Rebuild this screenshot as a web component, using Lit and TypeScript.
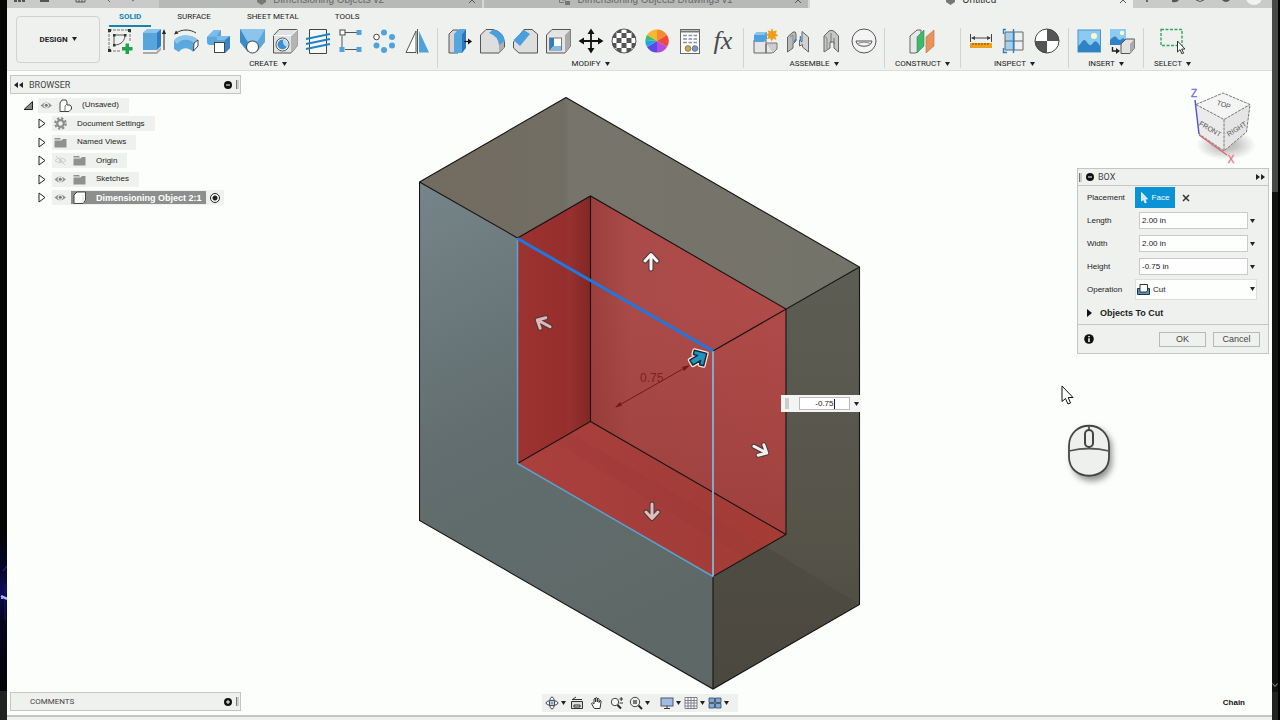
import { LitElement, html, svg, css, nothing, type SVGTemplateResult, type TemplateResult } from "lit";
import { customElement, property } from "lit/decorators.js";
import { classMap } from "lit/directives/class-map.js";

type Art = SVGTemplateResult;

const toolArt: Record<string, Art> = {
  sketch: svg`
    <path d="M2 2H23M2 2V23M23 2V14M2 23H13" fill="none" stroke="#777" stroke-dasharray="3 1"/>
    <path d="M7 7H18C18 12 15 17 7 17Z" fill="none" stroke="#555"/>
    <g fill="#333"><rect x="1" y="1" width="3" height="3"/><rect x="21" y="1" width="3" height="3"/><rect x="1" y="21" width="3" height="3"/><rect x="6" y="6" width="2.5" height="2.5"/><rect x="17" y="6" width="2.5" height="2.5"/><rect x="6" y="16" width="2.5" height="2.5"/></g>
    <path d="M18.5 15.500h3.500v3.500h3.500v3.500h-3.500v3.500h-3.500v-3.500h-3.500v-3.500h3.500z" fill="#1fa24a"/>`,
  extrude: svg`
    <path d="M3 24H16L21 19V22L17 26H3Z" fill="#aaa"/>
    <path d="M3 4.500L7 1H21L17 4.500Z" fill="#8cc4ec"/><path d="M3 4.500H17V22H3Z" fill="#57a5dc"/><path d="M17 4.500L21 1V18L17 22Z" fill="#2f7fc0"/>
    <path d="M24 22V4" stroke="#222" stroke-width="1"/><path d="M24 1L26 6H22Z" fill="#222"/>`,
  revolve: svg`
    <path d="M3 5C9 1 17 1 23 5" fill="none" stroke="#333"/><path d="M1 6.500L3 2.500L5.500 5.500Z" fill="#333"/>
    <path d="M1 13C5 6 19 6 25 12L20 24C16 19 9 19 6 24L1 21Z" fill="#5aa8de"/><path d="M1 13C5 6 19 6 25 12L21 15C16 10 8 11 4 16Z" fill="#8cc4ec"/>
    <path d="M21 15L25 12V18L20.500 23Z" fill="#fff" stroke="#444"/>`,
  sweep: svg`
    <path d="M1 9L8 2H15V8H24L24 20L19 25H10V17H4Q1 17 1 14Z" fill="#5aa8de"/><path d="M1 9L8 2H15L11 7V12H19L24 8V8H15" fill="#7dbbe8"/>
    <path d="M19 12L24 8V20L19 25Z" fill="#3785c4"/><rect x="8.500" y="14.500" width="10" height="10" fill="#fff" stroke="#444"/>`,
  loft: svg`
    <path d="M1 1H26V14L18 24H9L1 14Z" fill="#5aa8de"/><path d="M1 1H26L19 13H8Z" fill="#8cc4ec"/><path d="M1 1L8 13L9 24L1 14Z" fill="#3c8bca"/>
    <circle cx="13.500" cy="19" r="6" fill="#fff" stroke="#444"/>`,
  hole: svg`
    <path d="M1.500 7.500L7 1.500H25V18L19 25H1.500Z" fill="#e2e2e2" stroke="#555"/><path d="M19 7.500L25 1.500V18L19 25Z" fill="#b4b4b4"/><path d="M1.500 7.500H19L25 2" fill="none" stroke="#fff"/>
    <circle cx="10.500" cy="16.500" r="6.500" fill="#fff" stroke="#555"/><circle cx="10.500" cy="16.500" r="5" fill="#3f8fd0"/><path d="M11 11.500A5 5 0 0 1 15 19Q10 17 11 11.500Z" fill="#b4dcf6"/>`,
  thread: svg`
    <path d="M4.500 1.500H21.500V25.500H4.500Z" fill="#f7f7f7" stroke="#444"/>
    <path d="M1 11L25 6M1 16L25 11M1 21L25 16" stroke="#1f83c8" stroke-width="1.800"/>`,
  pattern: svg`
    <path d="M7 4.500H20M4 8V20M7 21.500H20" stroke="#555"/>
    <rect x="2" y="2" width="5" height="5" fill="#fff" stroke="#444"/><g fill="#4ea2de"><rect x="18.500" y="2" width="5" height="5"/><rect x="1.500" y="19" width="5" height="5"/><rect x="18.500" y="19" width="5" height="5"/></g>`,
  circular: svg`
    <circle cx="5.500" cy="9" r="2.800" fill="#fff" stroke="#444"/><g fill="#4ea2de"><circle cx="13" cy="4.500" r="3"/><circle cx="21" cy="9" r="3"/><circle cx="21" cy="17.500" r="3"/><circle cx="13" cy="22" r="3"/><circle cx="5.500" cy="17.500" r="3"/></g>`,
  mirror: svg`
    <path d="M12 3V24.500H2Z" fill="#fff" stroke="#555"/><path d="M15 3V24.500H25Z" fill="#4ea2de"/><path d="M13.500 1V26" stroke="#555"/>`,
  press: svg`
    <path d="M3 6L7 2H12V25H3Z" fill="#d5d5d5" stroke="#555"/><path d="M8 6L13 1H20L16 6V25H8Z" fill="#55a5de"/><path d="M16 6L20 1V20L16 25Z" fill="#2c77b5"/><path d="M18 13.500H23" stroke="#111" stroke-width="1.200"/><path d="M22 10.500L26 13.500L22 16.500Z" fill="#111"/>`,
  fillet: svg`
    <path d="M1.500 7L7 1.500H14Q25 4 25.500 15V19L20 25H1.500Z" fill="#dedede" stroke="#555"/><path d="M20 16L25 12V19L20 25Z" fill="#b0b0b0"/>
    <path d="M10 5L14 1.500Q25 4 25.500 13L20 17Q19 8 10 5Z" fill="#4a9fdc"/>`,
  chamfer: svg`
    <path d="M1.500 14L12 1.500H20L25.500 6V25H7L1.500 20Z" fill="#dedede" stroke="#555"/><path d="M1.500 12L12 2L18 6L8 18Z" fill="#4a9fdc"/>`,
  shell: svg`
    <path d="M1.500 7L7 1.500H25.500V18L20 25H1.500Z" fill="#e4e4e4" stroke="#555"/><path d="M20 7L25.500 1.500V18L20 25Z" fill="#aaa"/>
    <rect x="4.500" y="10" width="12" height="12" fill="#fff" stroke="#777"/><path d="M5 10H9V18L5 22Z" fill="#2f7fc0"/><path d="M9 18H16V22H5Z" fill="#7dbbe8"/>`,
  move: svg`
    <path d="M13 4V22M4 13H22" stroke="#111" stroke-width="1.800"/><path d="M13 .5L16.500 6H9.500ZM13 25.500L16.500 20H9.500ZM.5 13L6 9.500V16.500ZM25.500 13L20 9.500V16.500Z" fill="#111"/>`,
  appearance: svg`
    <defs><clipPath id="ball"><circle cx="13" cy="13" r="12"/></clipPath></defs><circle cx="13" cy="13" r="12" fill="#fff"/>
    <g clip-path="url(#ball)" fill="#555"><path d="M5.500 0h5v5h-5zM15.500 0h5v5h-5zM.5 5h5v5h-5zM10.500 5h5v5h-5zM20.500 5h6v5h-6zM5.500 10h5v5h-5zM15.500 10h5v5h-5zM.5 15h5v5h-5zM10.500 15h5v5h-5zM20.500 15h6v5h-6zM5.500 20h5v6h-5zM15.500 20h5v6h-5z"/></g>
    <circle cx="13" cy="13" r="12" fill="none" stroke="#555"/>`,
  wheel: svg`
    <g transform="translate(13 13)"><path d="M0 0L-10 -6A11.600 11.600 0 0 1 0 -11.600Z" fill="#f7b733"/><path d="M0 0V-11.600A11.600 11.600 0 0 1 10 -6Z" fill="#f58d2c"/><path d="M0 0L10 -6A11.600 11.600 0 0 1 10 6Z" fill="#ee4b3e"/><path d="M0 0L10 6A11.600 11.600 0 0 1 0 11.600Z" fill="#b54be0"/><path d="M0 0V11.600A11.600 11.600 0 0 1 -10 6Z" fill="#5a4be8"/><path d="M0 0L-10 6A11.600 11.600 0 0 1 -11.600 -1Z" fill="#22a4e0"/><path d="M0 0L-11.600 -1A11.600 11.600 0 0 1 -10 -6Z" fill="#3cc06a"/></g>`,
  material: svg`
    <rect x="3.500" y="1.500" width="19" height="24" fill="#fff" stroke="#666"/><path d="M3.500 3.500H22.500" stroke="#777" stroke-width="2"/>
    <path d="M6 7.500H10M11.500 7.500H15M16.500 7.500H20M6 11H10M11.500 11H15M16.500 11H20M6 14.500H10M11.500 14.500H15M16.500 14.500H20" stroke="#888fae" stroke-width="1.500"/>
    <circle cx="11" cy="20.500" r="2.800" fill="#e0a92e" stroke="#777"/><circle cx="18" cy="20.500" r="2.800" fill="#6f9cd0" stroke="#777"/>`,
  fx: svg`<text x="13" y="21" text-anchor="middle" font-family="Liberation Serif, serif" font-style="italic" font-size="26" fill="#4a4a4a">fx</text>`,
  component: svg`
    <path d="M2 12H14V25H2ZM14 16H23V22L20 25H14Z" fill="#e6e6e6" stroke="#666"/><path d="M14 15H25V21L21 25" fill="#ccc" stroke="#777"/><path d="M2 7L5 4H15V11L12 14H2Z" fill="#4ea2de"/><path d="M2 7L5 4H15L12 7Z" fill="#8cc4ec"/>
    <path d="M20 0L21.400 3.600L25 2.200L23.600 5.800L26.500 7.500L23.300 8.700L24.500 12L21.200 10.500L19.500 13.500L18.300 10.200L15 11.300L16.400 8L13.500 6.500L16.800 5.400L15.600 2.200L18.800 3.600Z" fill="#f39c12"/>`,
  joint: svg`
    <path d="M2.500 9L8 4Q11 3 11 6V13L8 16V20L2.500 24Z" fill="#b9b9b9" stroke="#666"/><path d="M5 9L8 7V16" fill="none" stroke="#888"/><path d="M14.500 12L17 14V3.500L23.500 9V24L17.500 19V16.500L14.500 18Z" fill="#d2d2d2" stroke="#666"/><path d="M9 14L11 11M15.500 8V13" stroke="#2f8bd0" stroke-width="1.500"/>`,
  asbuilt: svg`
    <path d="M6 8L11 3Q14 1 17 4L20.500 8V24L16 20V14H12V20L6 24Z" fill="#c6c6c6" stroke="#666"/><path d="M13 5V15M16 10V16" stroke="#777"/><path d="M6 8L9 10V21" fill="none" stroke="#888"/>`,
  origin: svg`
    <circle cx="13" cy="13" r="12" fill="#f4f4f4" stroke="#555"/><path d="M5 13H21C21 20 5 20 5 13Z" fill="#f4f4f4" stroke="#555"/><path d="M6 15.500Q13 12.500 20 15.500" fill="none" stroke="#888"/>`,
  plane: svg`
    <path d="M1 8L8 2H12V20L7 25H1Z" fill="#e8e8e8" stroke="#666"/><path d="M8 9L15 2V18L8 25Z" fill="#3fba6d" stroke="#2b8a50" stroke-width=".6"/><path d="M17 9L25 2V18L17 25Z" fill="#e8935c" stroke="#b8703f" stroke-width=".6"/>`,
  measure: svg`
    <path d="M2.500 6V14M23.500 6V14M4 10H22" stroke="#444"/><path d="M3 10L7 8V12ZM23 10L19 8V12Z" fill="#444"/>
    <rect x="2" y="15" width="22" height="5" fill="#f0a01c"/><path d="M5 15V17M8 15V17M11 15V17M14 15V17M17 15V17M20 15V17" stroke="#6b4a10"/>`,
  interfere: svg`
    <path d="M4 4H13V22H4Z" fill="#a5d0ef"/><path d="M4 4H22V22H4ZM4 13H22M13 4V22" fill="none" stroke="#666"/><path d="M5 1.500H2.500V6M2.500 20V24.500H6M12.500 1V25" fill="none" stroke="#2384c8" stroke-width="1.400"/>`,
  mass: svg`
    <circle cx="13" cy="13" r="12" fill="#fff"/><path d="M13 13V1A12 12 0 0 1 25 13ZM13 13V25A12 12 0 0 1 1 13Z" fill="#555"/><circle cx="13" cy="13" r="12" fill="none" stroke="#444"/>`,
  picture: svg`
    <rect x="2" y="2" width="22.500" height="22" fill="#8bcaf3" stroke="#4793c9"/><circle cx="18" cy="8" r="3" fill="#fff8c8"/><path d="M2 18C5 17 7 9 10 13S14 19 17 15S22 15 24 18V24H2Z" fill="#2f83c4"/>`,
  derive: svg`
    <rect x="1" y="1" width="16" height="16" fill="#8bcaf3"/><circle cx="13" cy="5" r="2.200" fill="#fff8c8"/><path d="M1 12C4 9 6 7 8 10S12 12 14 10L17 12V17H1Z" fill="#2f83c4"/>
    <path d="M12 16L17 11H25.500V20L21 25.500H12Z" fill="#e2e2e2" stroke="#555"/><path d="M21 16L25.500 11V20L21 25.500Z" fill="#aaa"/><path d="M3.500 19V23H7" fill="none" stroke="#222" stroke-width="1.400"/><path d="M7 20L11 23L7 26Z" fill="#222"/>`,
  select: svg`
    <rect x="2" y="1.500" width="21" height="16" fill="none" stroke="#2fa567" stroke-width="1.400" stroke-dasharray="3 1.500"/>
    <path d="M18.500 13V24L21 21.600L23 26L24.600 25.200L22.700 21H26Z" fill="#fff" stroke="#333"/>`,
};

const art = {
  eye: svg`<path d="M0.500 6.500Q6 0.500 12 6.500Q6 12 0.500 6.500Z" fill="#8f9190"/><circle cx="6.250" cy="6.250" r="2.600" fill="#eee"/><circle cx="6.250" cy="6.250" r="1.500" fill="#777"/>`,
  eyeOff: svg`<path d="M1 6.500Q6 1.500 12 6.500Q6 11 1 6.500Z" fill="none" stroke="#ccc"/><path d="M2 2L11 11" stroke="#ccc"/><circle cx="6.500" cy="6.500" r="1.500" fill="#ccc"/>`,
  folder: svg`<path d="M0.500 2H6L7 3.500H0.500ZM0.500 4.500H7.500L9 3H12.500V11.500H0.500Z" fill="#8f9190"/>`,
  gear: svg`<circle cx="6.500" cy="6.500" r="5.200" fill="none" stroke="#8a8c8b" stroke-width="2.200" stroke-dasharray="2.300 1.780"/><circle cx="6.500" cy="6.500" r="3.300" fill="none" stroke="#8a8c8b" stroke-width="2.200"/>`,
  assembly: svg`<path d="M1 4L3 1H7L8 3V6H11L12.500 8V10L10 12.500H1Z" fill="#fff" stroke="#444"/><path d="M6 12V7L8 5" fill="none" stroke="#777"/>`,
  body: svg`<path d="M1 4L4 1H12.500V9L10 12.500H1Z" fill="#fff" stroke="#444"/><path d="M10 4V12" stroke="#ddd"/>`,
};

const glyph = (a: Art, w = 13, h = 13) => html`<svg class="glyph" width=${w} height=${h} viewBox="0 0 ${w} ${h}" aria-hidden="true">${a}</svg>`;
const caret = html`<svg width="5" height="5" viewBox="0 0 5 5" aria-hidden="true"><path d="M0 0H5L2.500 4Z" fill="#222"/></svg>`;

const reset = css`
  :host { box-sizing: border-box; }
  *, *::before, *::after { box-sizing: border-box; }
  button, input, select { font: inherit; color: inherit; margin: 0; padding: 0; border: 0; background: none; border-radius: 0; }
  svg { display: block; flex: none; }
`;

@customElement("cad-titlebar")
class CadTitlebar extends LitElement {
  static styles = [reset, css`
    :host { display: flex; height: 8px; overflow: hidden; background: #c9cac9; color: #666; font: 10px/12px "Liberation Sans", sans-serif; }
    .quick { width: 152px; display: flex; padding-left: 7px; align-items: flex-start; }
    .doc { flex: 1; display: flex; align-items: flex-end; justify-content: center; gap: 7px; background: #b7b9b7; border-right: 2px solid #d5d6d5; position: relative; padding-bottom: 2px; color: #666; }
    .active { background: #eff1ef; color: #333; border: 0; }
    .end { width: 139px; display: flex; padding-left: 10px; }
    .close { position: absolute; right: 6px; bottom: 4px; }
  `];
  render() {
    const cube = html`<svg width="9" height="9" viewBox="0 0 9 9"><path d="M0 0H9V5L4.500 8L0 5Z" fill="#777"/></svg>`;
    const sheet = html`<svg width="11" height="9" viewBox="0 0 11 9"><path d="M.5 0V5.500H5M3 3H7" fill="none" stroke="#777"/><path d="M6 4H11V8H6Z" fill="#777"/></svg>`;
    const x = html`<svg class="close" width="8" height="8" viewBox="0 0 8 8"><path d="M1 1L7 7M7 1L1 7" stroke="#555"/></svg>`;
    return html`
      <div class="quick">
        <svg width="130" height="8" viewBox="0 0 130 8"><path d="M0 0h3v2h-3zM4 0h3v2h-3zM8 0h3v2h-3zM26 0h9v2h-9z" fill="#555"/><path d="M62 0v2h9v-2M65 0v2M68 0v2" stroke="#555" fill="none"/><path d="M94 0l2 2M120 0l-2 1" stroke="#666"/></svg>
      </div>
      <div class="doc">${cube}<span>Dimensioning Objects v2</span>${x}</div>
      <div class="doc">${sheet}<span>Dimensioning Objects Drawings v1</span>${x}</div>
      <div class="doc active">${cube}<span>Untitled</span>${x}</div>
      <div class="end"><svg width="129" height="8" viewBox="0 0 129 8"><rect x="15" y="0" width="114" height="8" fill="#c9cac9"/><path d="M4 0V2" stroke="#444" stroke-width="1.500"/><path d="M29 0h7q-2 3-7 2zM79 0h8q-4 4-8 0z" fill="#555"/><path d="M53 0q4 3 8 0" fill="none" stroke="#555"/><circle cx="111" cy="-3" r="8" fill="#f2f2f2"/></svg></div>`;
  }
}

interface Group { label: string; tools: string[] }
const groups: Group[] = [
  { label: "CREATE", tools: ["sketch", "extrude", "revolve", "sweep", "loft", "hole", "thread", "pattern", "circular", "mirror"] },
  { label: "MODIFY", tools: ["press", "fillet", "chamfer", "shell", "move", "appearance", "wheel", "material", "fx"] },
  { label: "ASSEMBLE", tools: ["component", "joint", "asbuilt", "origin"] },
  { label: "CONSTRUCT", tools: ["plane"] },
  { label: "INSPECT", tools: ["measure", "interfere", "mass"] },
  { label: "INSERT", tools: ["picture", "derive"] },
  { label: "SELECT", tools: ["select"] },
];

@customElement("cad-ribbon")
class CadRibbon extends LitElement {
  static styles = [reset, css`
    :host { display: flex; height: 63px; background: #eff1ef; border-bottom: 1px solid #dcdedc; color: #222; font: 8px/10px Roboto, sans-serif; }
    .workspace { width: 84px; height: 47px; margin: 8px 0 0 9px; border: 1px solid #d0d2d0; border-radius: 4px; display: flex; align-items: center; justify-content: center; gap: 4px; font-weight: 700; }
    .main { flex: 1; min-width: 0; }
    .tabs { display: flex; gap: 16px; padding-left: 9px; height: 19px; }
    .tab { padding: 0 10px; border-bottom: 2px solid transparent; }
    .current { color: #0a84b5; border-color: #1286b0; font-weight: 700; }
    .groups { display: flex; }
    .group { display: flex; flex-direction: column; align-items: center; padding: 0 4px; border-left: 1px solid #d2d4d2; height: 40px; margin-top: 1px; }
    .group:first-child { border: 0; padding-left: 3px; }
    .tools { display: flex; }
    .tool { width: 33px; height: 26px; display: grid; place-items: center; }
    .menu { display: flex; align-items: center; gap: 4px; height: 10px; margin-top: 5px; white-space: nowrap; padding: 0 6px; }
  `];
  render() {
    return html`
      <button class="workspace">DESIGN ${caret}</button>
      <div class="main">
        <nav class="tabs">
          ${["SOLID", "SURFACE", "SHEET METAL", "TOOLS"].map((t, i) => html`<button class=${classMap({ tab: true, current: i === 0 })}>${t}</button>`)}
        </nav>
        <div class="groups">
          ${groups.map(g => html`
            <div class="group">
              <div class="tools">
                ${g.tools.map(t => html`<button class="tool" aria-label=${t}><svg width="26" height="26" viewBox="0 0 26 26">${toolArt[t]}</svg></button>`)}
              </div>
              <button class="menu">${g.label} ${caret}</button>
            </div>`)}
        </div>
      </div>`;
  }
}

interface Node { label: string; art: Art; eye?: "on" | "off"; root?: boolean; active?: boolean }
const nodes: Node[] = [
  { label: "(Unsaved)", art: art.assembly, eye: "on", root: true },
  { label: "Document Settings", art: art.gear },
  { label: "Named Views", art: art.folder },
  { label: "Origin", art: art.folder, eye: "off" },
  { label: "Sketches", art: art.folder, eye: "on" },
  { label: "Dimensioning Object 2:1", art: art.body, eye: "on", active: true },
];

const panelStyles = css`
  .bar { display: flex; align-items: center; background: #eff1ef; border: 1px solid #c4c6c4; color: #444; font-family: Roboto, sans-serif; }
  .grow { flex: 1; }
  .grip { width: 3px; height: 9px; border-left: 1px solid #777; background: #ccc; }
`;

@customElement("cad-browser")
class CadBrowser extends LitElement {
  static styles = [reset, panelStyles, css`
    :host { display: block; color: #222; font: 8px/12px "Liberation Sans", sans-serif; }
    .bar { height: 19px; padding: 0 1px 0 3px; font-size: 9px; gap: 4px; }
    .title { padding-left: 2px; }
    .tree { list-style: none; margin: 2px 0 0; padding: 0; height: 111px; display: grid; grid-auto-rows: 1fr; }
    .node { display: flex; align-items: center; gap: 4px; padding-left: 26px; }
    .root { padding-left: 12px; }
    .twist { width: 12px; display: grid; place-items: center; }
    .chip { display: flex; align-items: center; height: 15px; background: #eff1ef; padding-left: 2px; }
    .see { width: 12px; margin-right: 5px; }
    .item { display: flex; align-items: center; gap: 10px; height: 13px; padding: 0 10px 0 2px; white-space: nowrap; }
    .solo { padding-left: 0; }
    .picked { background: #8d8f8e; color: #fff; font-weight: 700; font-size: 9px; padding-right: 4px; }
    .radio { appearance: none; width: 10px; height: 10px; border: 1px solid #222; border-radius: 50%; margin: 0 4px; background: radial-gradient(circle, #222 2px, #fff 3px); }
  `];
  render() {
    return html`
      <header class="bar">
        <svg width="9" height="6" viewBox="0 0 9 6"><path d="M0 3L4 0V6ZM5 3L9 0V6Z" fill="#222"/></svg>
        <span class="title">BROWSER</span><span class="grow"></span>
        <svg width="8" height="8" viewBox="0 0 8 8"><circle cx="4" cy="4" r="4" fill="#111"/><path d="M2 4H6" stroke="#fff"/></svg>
        <span class="grip"></span>
      </header>
      <ul class="tree">
        ${nodes.map(n => html`
          <li class=${classMap({ node: true, root: !!n.root })}>
            <button class="twist" aria-label="Toggle ${n.label}">
              ${n.root
                ? html`<svg width="10" height="9" viewBox="0 0 10 9"><path d="M9.500 .5V8.500H1Z" fill="#888" stroke="#222"/></svg>`
                : html`<svg width="8" height="11" viewBox="0 0 8 11"><path d="M1 1L7 5.500L1 10Z" fill="#fff" stroke="#222"/></svg>`}
            </button>
            <div class="chip">
              ${n.eye ? html`<button class="see" aria-label="Visibility of ${n.label}">${glyph(n.eye === "on" ? art.eye : art.eyeOff)}</button>` : nothing}
              <button class=${classMap({ item: true, solo: !n.eye, picked: !!n.active })}>${glyph(n.art)}<span>${n.label}</span></button>
              ${n.active ? html`<input class="radio" type="radio" checked aria-label="Activate component">` : nothing}
            </div>
          </li>`)}
      </ul>`;
  }
}

@customElement("cad-box-dialog")
class CadBoxDialog extends LitElement {
  static styles = [reset, panelStyles, css`
    :host { display: block; border: 1px solid #c4c6c4; background: #eff1ef; color: #222; font: 8px/12px "Liberation Sans", sans-serif; }
    .bar { height: 17px; border-width: 0 0 1px; padding: 0 3px 0 1px; font-size: 9px; gap: 4px; }
    .body { display: grid; grid-template-columns: minmax(0, 1fr); grid-auto-rows: 23px; padding: 0 11px 0 9px; }
    .row { display: grid; grid-template-columns: 48px minmax(0, 1fr); align-items: center; }
    .pick { display: flex; align-items: center; gap: 7px; }
    .face { width: 40px; height: 21px; background: #0a93d6; color: #fff; display: flex; align-items: center; justify-content: center; gap: 4px; }
    .value { display: flex; align-items: center; padding-left: 4px; }
    .field { flex: 1; min-width: 0; height: 17px; border: 1px solid #c9cbc9; background: #fdfefd; padding: 0 2px; }
    .drop { width: 9px; height: 17px; display: grid; place-items: center end; padding-right: 2px; }
    .choice { position: relative; height: 21px; }
    .choice select { appearance: none; width: 100%; height: 21px; background: #fdfefd; border: 1px solid #dcdedc; padding-left: 17px; }
    .choice .cut { position: absolute; left: 2px; top: 4px; pointer-events: none; }
    .choice .tip { position: absolute; right: 2px; top: 8px; pointer-events: none; }
    .section { display: flex; align-items: center; gap: 8px; font-size: 9px; font-weight: 700; }
    .foot { display: flex; align-items: center; gap: 7px; height: 29px; padding: 0 8px 0 6px; border-top: 1px solid #c4c6c4; }
    .push { width: 47px; height: 15px; border: 1px solid #b8bab8; font-size: 9px; color: #444; }
  `];
  private value(id: string, label: string, value: string) {
    return html`<div class="row"><label for=${id}>${label}</label><div class="value"><input class="field" id=${id} .value=${value}><button class="drop" aria-label="${label} options"><svg width="5" height="4" viewBox="0 0 5 4"><path d="M0 0H5L2.500 4Z" fill="#222"/></svg></button></div></div>`;
  }
  render() {
    return html`
      <header class="bar">
        <span class="grip"></span>
        <svg width="8" height="8" viewBox="0 0 8 8"><circle cx="4" cy="4" r="4" fill="#111"/><path d="M2 4H6" stroke="#fff"/></svg>
        <span>BOX</span><span class="grow"></span>
        <svg width="9" height="6" viewBox="0 0 9 6"><path d="M0 0L4 3L0 6ZM5 0L9 3L5 6Z" fill="#222"/></svg>
      </header>
      <div class="body">
        <div class="row"><span>Placement</span>
          <div class="pick">
            <button class="face"><svg width="7" height="12" viewBox="0 0 7 12"><path d="M.5 .5V9L2.500 7.300L4 11L5.300 10.400L3.900 7H6.500Z" fill="#cde8f7" stroke="#fff" stroke-width=".8"/></svg>Face</button>
            <button aria-label="Clear"><svg width="8" height="8" viewBox="0 0 8 8"><path d="M1 1L7 7M7 1L1 7" stroke="#333" stroke-width="1.500"/></svg></button>
          </div>
        </div>
        ${this.value("length", "Length", "2.00 in")}
        ${this.value("width", "Width", "2.00 in")}
        ${this.value("height", "Height", "-0.75 in")}
        <div class="row"><label for="operation">Operation</label>
          <div class="choice">
            <select id="operation"><option>Cut</option></select>
            <svg class="cut" width="13" height="13" viewBox="0 0 13 13"><path d="M.5 5.500H12.500V11.500H.5Z" fill="#5591c0" stroke="#234"/><path d="M3 1.500H10.500V8L9 9H3Z" fill="#fff" stroke="#333"/></svg>
            <svg class="tip" width="5" height="4" viewBox="0 0 5 4"><path d="M0 0H5L2.500 4Z" fill="#222"/></svg>
          </div>
        </div>
        <button class="section"><svg width="5" height="8" viewBox="0 0 5 8"><path d="M0 0L5 4L0 8Z" fill="#111"/></svg>Objects To Cut</button>
      </div>
      <footer class="foot">
        <svg width="10" height="10" viewBox="0 0 10 10"><circle cx="5" cy="5" r="4.800" fill="#111"/><path d="M5 4.300V8M5 2V3.300" stroke="#fff" stroke-width="1.500"/></svg>
        <span class="grow"></span>
        <button class="push">OK</button><button class="push">Cancel</button>
      </footer>`;
  }
}

@customElement("cad-model")
class CadModel extends LitElement {
  static styles = [reset, css`
    :host { display: block; position: relative; color: #222; font: 8px/10px "Liberation Sans", sans-serif; }
    .entry { position: absolute; left: 362px; top: 298px; width: 79px; height: 17px; display: flex; align-items: center; justify-content: flex-end; gap: 4px; background: #f3f4f3; padding-right: 1px; }
    .dots { width: 4px; height: 11px; margin-right: auto; margin-left: 4px; background: radial-gradient(circle, #ccc 1px, transparent 1px) 0 0 / 2px 2px; }
    .entry input { width: 51px; height: 13px; border: 1px solid #bbb; background: #fff; text-align: right; padding-right: 15px; }
    .beam { position: absolute; left: 53px; top: 4px; width: 1px; height: 10px; background: #222; }
  `];
  private arrow(x: number, y: number, turn: number, fill: string) {
    const d = "M-8 0H6M0 -6L6.500 0L0 6";
    return svg`<g transform="translate(${x} ${y}) rotate(${turn})" fill="none" stroke-linejoin="round" stroke-linecap="round"><path d=${d} stroke="#4a3838" stroke-width="5"/><path d=${d} stroke=${fill} stroke-width="3"/></g>`;
  }
  render() {
    return html`
      <svg width="442" height="594" viewBox="419 97 442 594" role="img" aria-label="Box with a rectangular cut">
        <defs>
          <linearGradient id="front" x2="0.300" y2="1"><stop offset="0" stop-color="#76858a"/><stop offset=".5" stop-color="#626e6f"/><stop offset="1" stop-color="#5e6967"/></linearGradient>
          <linearGradient id="top"><stop offset="0" stop-color="#736b60"/><stop offset=".33" stop-color="#716e64"/><stop offset=".34" stop-color="#77756b"/><stop offset="1" stop-color="#747369"/></linearGradient>
          <linearGradient id="side" x2="0" y2="1"><stop offset="0" stop-color="#5c5d53"/><stop offset=".6" stop-color="#57544a"/><stop offset="1" stop-color="#4b4940"/></linearGradient>
          <linearGradient id="wall"><stop offset="0" stop-color="#9d3331"/><stop offset=".66" stop-color="#952e2c"/><stop offset=".7" stop-color="#98312f"/><stop offset="1" stop-color="#812725"/></linearGradient>
          <linearGradient id="back"><stop offset="0" stop-color="#9c3e3c"/><stop offset=".2" stop-color="#aa4b49"/><stop offset="1" stop-color="#b04b48"/></linearGradient>
          <linearGradient id="shade" x2="0" y2="1"><stop offset=".3" stop-color="#8b3230" stop-opacity="0"/><stop offset="1" stop-color="#86302d" stop-opacity=".4"/></linearGradient>
          <linearGradient id="floor"><stop offset="0" stop-color="#ab403d"/><stop offset=".6" stop-color="#a33d39"/><stop offset="1" stop-color="#a53c34"/></linearGradient>
        </defs>
        <path d="M419.500 182L713 351V689L419.500 520.500Z" fill="url(#front)"/>
        <path d="M419.500 182L566 97.500L859.500 267L713 351Z" fill="url(#top)"/>
        <path d="M713 351L859.500 267V604.500L713 689Z" fill="url(#side)"/>
        <path d="M713 576.500L765 546L859.500 604.500L713 689Z" fill="#4b4840" opacity=".6"/>
        <path d="M517.500 238L590.500 196V421.500L517.500 463.500Z" fill="url(#wall)"/>
        <path d="M590.500 196L786 309V534.500L590.500 421.500Z" fill="url(#back)"/>
        <path d="M590.500 196L786 309V534.500L590.500 421.500Z" fill="url(#shade)"/>
        <path d="M517.500 463.500L590.500 421.500L786 534.500L713 576.500Z" fill="url(#floor)"/>
        <path d="M570 433L765 546L745 558L555 442Z" fill="#8f3733" opacity=".15"/>
        <g fill="none" stroke="#161412" stroke-width="1.100">
          <path d="M419.500 182L566 97.500L859.500 267V604.500L713 689L419.500 520.500ZM419.500 182L517.500 238L590.500 196L786 309V534.500L713 576.500V689M590.500 196V421.500L517.500 463.500M590.500 421.500L786 534.500M713 351L859.500 267"/>
          <path d="M517.500 463.500L713 576.500" stroke="#27394a"/>
        </g>
        <path d="M517.500 238V463.500L713 576.500" fill="none" stroke="#5fa3cf" stroke-width="1.500"/>
        <path d="M713 351V576.500" stroke="#85a9c9" stroke-width="2"/>
        <path d="M517.500 238.500L713 351" stroke="#1f78e0" stroke-width="3"/>
        <path d="M616 407L688 366" stroke="#7a1517"/><path d="M615 407.500L620 402L622 405.500ZM690 365L682 367L684 371Z" fill="#7a1517"/>
        <text x="640" y="382" font-size="12" fill="#7b2222">0.75</text>
        ${this.arrow(651, 261, -90, "#f5f5f5")}
        ${this.arrow(652, 512, 90, "#e3bcbc")}
        ${this.arrow(543, 323, -152, "#e0b6ba")}
        ${this.arrow(761, 450, 28, "#f5f0f0")}
        <g transform="translate(699 358) rotate(-31)" stroke-linejoin="round"><path d="M-9 -3H0L-3 -6L0 -9L9 0L0 9L-3 6L0 3H-9Z" fill="#fbe6e2" stroke="#fbe6e2" stroke-width="4"/><path d="M-9 -3H0L-3 -6L0 -9L9 0L0 9L-3 6L0 3H-9Z" fill="#2591bd" stroke="#172b36" stroke-width="1.500"/></g>
      </svg>
      <div class="entry"><span class="dots"></span><input aria-label="Height value" .value=${"-0.75"}><span class="beam"></span><svg width="5" height="4" viewBox="0 0 5 4"><path d="M0 0H5L2.500 4Z" fill="#222"/></svg></div>`;
  }
}

@customElement("cad-navbar")
class CadNavbar extends LitElement {
  static styles = [reset, css`
    :host { display: flex; align-items: center; height: 18px; background: #eff1ef; padding: 0 8px 0 1px; }
    .nav { display: flex; align-items: center; gap: 2px; width: 20px; justify-content: center; height: 18px; }
    .more { width: 24px; }
    .spacer { width: 7px; }
  `];
  @property({ attribute: false }) items: { name: string; art: Art; more?: boolean; split?: boolean }[] = [
    { name: "Orbit", more: true, art: svg`<ellipse cx="7" cy="7" rx="6" ry="2.500" fill="none" stroke="#445"/><ellipse cx="7" cy="7" rx="2.500" ry="6" fill="none" stroke="#445"/><circle cx="7" cy="7" r="1.500" fill="#69a5cf"/>` },
    { name: "Look at", art: svg`<path d="M1.500 5.500H12.500V12.500H1.500ZM2 3.500H12M4 9H10V11H4Z" fill="#ddd" stroke="#333"/><path d="M3 3L6 1" stroke="#333"/>` },
    { name: "Pan", art: svg`<path d="M4 12L1.500 7.500Q2 6 4 8V3Q5 2 5.500 3.500V6V2Q7 1 7.300 2.500V6V2.500Q9 2 9 3.500V6.500L10 4.500Q11.500 4.500 11 6L10 12.500H4.500Z" fill="#fff" stroke="#333"/>` },
    { name: "Zoom", art: svg`<circle cx="5" cy="6" r="3.700" fill="#f8f8f8" stroke="#444"/><path d="M7.500 9L11 12.500" stroke="#222" stroke-width="2"/><path d="M9.500 3H13M11.200 1V5M9.500 7H13" stroke="#333"/>` },
    { name: "Fit", more: true, art: svg`<circle cx="6" cy="6" r="4.700" fill="#eee" stroke="#444"/><rect x="4" y="4" width="4" height="4" fill="#777"/><path d="M9.500 9.500L13 13" stroke="#222" stroke-width="2"/>` },
    { name: "Display", more: true, split: true, art: svg`<rect x="1" y="2" width="12" height="8" fill="#9dbde4" stroke="#556"/><path d="M7 10V12M4 12.500H10" stroke="#334"/>` },
    { name: "Grid", more: true, art: svg`<path d="M1 1.500H13V12.500H1ZM4 1V13M7 1V13M10 1V13M1 4.500H13M1 7H13M1 10H13" fill="#fff" stroke="#667" stroke-width=".8"/>` },
    { name: "Viewports", more: true, art: svg`<path d="M1 2H6.500V6.500H1ZM7.500 2H13V6.500H7.500ZM1 7.500H6.500V12H1ZM7.500 7.500H13V12H7.500Z" fill="#7fa8dc" stroke="#345" stroke-width=".8"/>` },
  ];
  render() {
    return this.items.map((n): TemplateResult => html`
      ${n.split ? html`<span class="spacer"></span>` : nothing}
      <button class=${classMap({ nav: true, more: !!n.more })} aria-label=${n.name}><svg width="14" height="14" viewBox="0 0 14 14">${n.art}</svg>${n.more ? html`<svg width="5" height="4" viewBox="0 0 5 4"><path d="M0 0H5L2.500 4Z" fill="#222"/></svg>` : nothing}</button>`);
  }
}

@customElement("app-root")
class AppRoot extends LitElement {
  static styles = [reset, panelStyles, css`
    :host { display: grid; grid-template-columns: 7px 1fr 8px; height: 100vh; background: #050505; overflow: hidden; }
    .edge { display: block; background: linear-gradient(#050505 74%, #05062a 79%, #0a0d58 82%, #05061c 86%, #030309 96%, #222 96%); }
    .edge svg { margin-top: 560px; }
    .rail { display: flex; flex-direction: column; justify-content: space-between; background: linear-gradient(90deg, #111 6px, #000 6px); }
    .thumb { width: 6px; height: 192px; background: #474847; }
    .window { display: flex; flex-direction: column; min-width: 0; background: #fcfefc; }
    .canvas { flex: 1; min-height: 0; position: relative; display: flex; justify-content: center; align-items: flex-start; padding-top: 26px; border-bottom: 2px solid #c4c6c4; }
    .browser { position: absolute; left: 3px; top: 4px; width: 231px; }
    .dialog { position: absolute; right: 3px; top: 97px; width: 192px; }
    .cube { position: absolute; right: 14px; top: 16px; }
    .comments { position: absolute; left: 3px; bottom: 4px; width: 231px; height: 19px; padding: 0 1px 0 19px; gap: 4px; font-size: 8px; }
    .navbar { position: absolute; left: 535px; bottom: 3px; }
    .pointer { position: absolute; right: 198px; top: 314px; }
    .mouse { position: absolute; right: 150px; top: 346px; }
    .status { position: absolute; right: 27px; bottom: 6px; color: #111; font: 700 8px/12px "Liberation Sans", sans-serif; }
    .foot { height: 3px; background: #eff1ef; }
  `];
  render() {
    return html`
      <div class="edge"><svg width="7" height="80" viewBox="0 0 7 80"><path d="M3 11L7 6" stroke="#3b35a8"/><path d="M5 60V24" stroke="#1c1960"/><path d="M1 36L7 39" stroke="#a9c0ff" stroke-width="2.500"/><rect x="1" y="37" width="2" height="2" fill="#99f"/></svg></div>
      <main class="window">
        <cad-titlebar></cad-titlebar>
        <cad-ribbon></cad-ribbon>
        <section class="canvas">
          <cad-model></cad-model>
          <cad-browser class="browser"></cad-browser>
          <svg class="cube" width="72" height="80" viewBox="1186 87 72 80" font-family="Liberation Sans, sans-serif" text-anchor="middle">
            <defs><radialGradient id="soft"><stop offset=".3" stop-color="#999" stop-opacity=".6"/><stop offset="1" stop-color="#999" stop-opacity="0"/></radialGradient></defs>
            <ellipse cx="1226" cy="145" rx="30" ry="15" fill="url(#soft)"/>
            <path d="M1223 93L1250 104.500L1224 119.500L1196 104.500Z" fill="#f4f4f4"/><path d="M1196 104.500L1224 119.500V151L1199 134Z" fill="#eaebea"/><path d="M1224 119.500L1250 104.500L1246.500 132L1224 151Z" fill="#e4e5e4"/>
            <path d="M1196 104.500L1223 93L1250 104.500L1246.500 132L1224 151L1199 134M1196 104.500L1224 119.500L1250 104.500M1224 119.500V151" fill="none" stroke="#777" stroke-dasharray="3 1"/>
            <path d="M1195 100L1199 134" stroke="#5b57cf" stroke-width="1.500"/><path d="M1199 135L1227 155" stroke="#e0686c" stroke-width="1.500"/>
            <text x="1194" y="97" font-size="10" fill="#7672e0" stroke="#7672e0" stroke-width=".4">Z</text><text x="1231" y="163" font-size="10" fill="#e8797c" stroke="#e8797c" stroke-width=".4">X</text>
            <g font-size="7" fill="#555"><text transform="translate(1223 107) rotate(18)">TOP</text><text transform="translate(1209 131) rotate(30)">FRONT</text><text transform="translate(1238 131) rotate(-32)">RIGHT</text></g>
          </svg>
          <cad-box-dialog class="dialog"></cad-box-dialog>
          <svg class="pointer" width="13" height="20" viewBox="0 0 13 20"><path d="M1 1V16.500L4.500 13.500L7 19L9.500 18L7.200 12.500H12Z" fill="#fff" stroke="#111"/></svg>
          <svg class="mouse" width="64" height="70" viewBox="0 0 64 70">
            <defs><filter id="blur" x="-30%" y="-30%" width="160%" height="160%"><feGaussianBlur stdDeviation="3"/></filter></defs>
            <rect x="14" y="12" width="40" height="52" rx="19" fill="#777" opacity=".8" filter="url(#blur)"/>
            <path d="M11 29C11 2 51 2 51 29V40C51 65 11 65 11 40Z" fill="#eef0ee" stroke="#444" stroke-width="1.800"/>
            <path d="M11 34Q31 29 51 34M31 9V14M31 29V32" fill="none" stroke="#555" stroke-width="1.800"/><rect x="27" y="13" width="8" height="17" rx="4" fill="#eee" stroke="#444" stroke-width="2"/>
          </svg>
          <div class="bar comments"><span>COMMENTS</span><span class="grow"></span>
            <svg width="8" height="8" viewBox="0 0 8 8"><circle cx="4" cy="4" r="4" fill="#111"/><path d="M2 4H6M4 2V6" stroke="#fff"/></svg><span class="grip"></span></div>
          <cad-navbar class="navbar"></cad-navbar>
          <span class="status">Chain</span>
        </section>
        <div class="foot"></div>
      </main>
      <div class="rail"><span class="thumb"></span><svg width="6" height="38" viewBox="0 0 6 38"><path d="M.5 1.500L3 4.500L5.500 1.500" fill="none" stroke="#999"/><rect y="10" width="6" height="28" fill="#222"/></svg></div>`;
  }
}
